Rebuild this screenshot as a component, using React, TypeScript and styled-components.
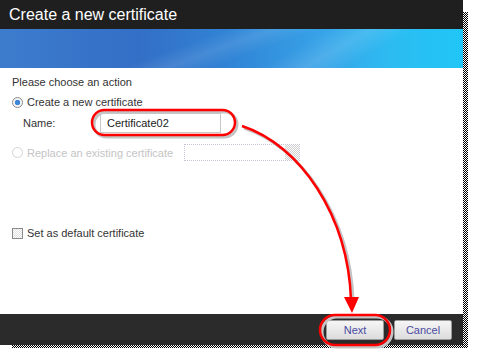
import React from "react";
import styled, { createGlobalStyle } from "styled-components";

const GlobalStyle = createGlobalStyle`
  html, body {
    margin: 0;
    padding: 0;
    background: #ffffff;
  }
`;

const Page = styled.div`
  position: relative;
  width: 479px;
  height: 362px;
  overflow: hidden;
  background: #fff;
`;

const Dialog = styled.div`
  position: relative;
  width: 463px;
  height: 345px;
  display: flex;
  flex-direction: column;
  background: #fff;

  /* dithered drop shadow of the screenshot */
  &::before {
    content: "";
    position: absolute;
    top: 12px;
    left: 12px;
    right: -5px;
    bottom: -3px;
    background: repeating-conic-gradient(#000 0 25%, #fff 0 50%) 0 0 / 2px 2px;
    z-index: 0;
  }
`;

const TitleBar = styled.div`
  position: relative;
  z-index: 1;
  height: 29px;
  flex: none;
  display: flex;
  align-items: center;
  padding-left: 9px;
  background: #1f1f1f;
  color: #ffffff;
  font-family: "Liberation Sans", Arial, sans-serif;
  font-size: 16px;
  padding-top: 1px;
  box-sizing: border-box;
`;

const Banner = styled.div`
  position: relative;
  z-index: 1;
  height: 39px;
  flex: none;
  background:
    linear-gradient(160deg, transparent 0 40%, rgba(255, 255, 255, 0.1) 48%, transparent 56%),
    linear-gradient(150deg, transparent 0 62%, rgba(255, 255, 255, 0.12) 70%, transparent 78%),
    linear-gradient(90deg, #3d7ccd 0%, #336fc6 30%, #3184d6 50%, #37a4e8 70%, #2cbcf2 85%, #20c6f6 100%);
`;

const Body = styled.div`
  position: relative;
  z-index: 1;
  flex: 1;
  background: #fff;
  padding: 7px 12px 0;
  font-family: "Liberation Sans", Tahoma, sans-serif;
  font-size: 11px;
  color: #333;
`;

const Heading = styled.div`
  line-height: 14px;
`;

const OptionRow = styled.div<{ $top: number; $disabled?: boolean }>`
  display: flex;
  align-items: center;
  gap: 4px;
  margin-top: ${(p) => p.$top}px;
  height: 14px;
  line-height: 14px;
  color: ${(p) => (p.$disabled ? "#c4c4c4" : "#333")};
`;

const Radio = styled.span<{ $checked?: boolean; $disabled?: boolean }>`
  width: 9px;
  height: 9px;
  border-radius: 50%;
  border: 1px solid ${(p) => (p.$disabled ? "#d4d4d4" : "#8a8a8a")};
  background: ${(p) =>
    p.$checked ? "radial-gradient(circle, #3a86d4 0 2.5px, #f4f4f4 3px)" : "#fff"};
  flex: none;
`;

const Checkbox = styled.span`
  width: 9px;
  height: 9px;
  border: 1px solid #8a8a8a;
  background: repeating-conic-gradient(#e0e0e0 0 25%, #fff 0 50%) 0 0 / 2px 2px;
  flex: none;
`;

const NameRow = styled.div`
  display: flex;
  align-items: center;
  margin-top: 4px;
  height: 20px;
  padding-left: 11px;
`;

const Label = styled.span`
  width: 77px;
`;

const TextInput = styled.div`
  width: 113px;
  height: 18px;
  border: 1px solid #c8c8c8;
  padding-left: 6px;
  line-height: 18px;
  color: #222;
`;

const ReplaceRow = styled.div`
  display: flex;
  align-items: center;
  margin-top: 11px;
  height: 17px;
`;

const ReplaceOption = styled(OptionRow)`
  margin-top: 0;
  width: 172px;
`;

const DisabledSelect = styled.div`
  position: relative;
  width: 114px;
  height: 15px;
  border: 1px dotted #c4c4d4;
`;

const SelectArrow = styled.span`
  position: absolute;
  right: 0;
  top: 0;
  bottom: 0;
  width: 14px;
  background: repeating-conic-gradient(#d0d0d0 0 25%, #fff 0 50%) 0 0 / 2px 2px;
`;

const Footer = styled.div`
  position: relative;
  z-index: 1;
  height: 31px;
  flex: none;
  background: #2b2b2b;
  display: flex;
  align-items: center;
  justify-content: flex-end;
  gap: 10px;
  padding-right: 11px;
`;

const Button = styled.button`
  width: 58px;
  height: 20px;
  padding: 0;
  border: 1px solid #9a9a9a;
  border-radius: 2px;
  background: linear-gradient(#f6f6f6, #dcdcdc);
  color: #4a4aa0;
  font-family: "Liberation Sans", Tahoma, sans-serif;
  font-size: 11px;
`;

const Overlay = styled.svg`
  position: absolute;
  left: 0;
  top: 0;
  z-index: 5;
  pointer-events: none;
`;

export default function App() {
  return (
    <Page>
      <GlobalStyle />
      <Dialog>
        <TitleBar>Create a new certificate</TitleBar>
        <Banner />
        <Body>
          <Heading>Please choose an action</Heading>
          <OptionRow $top={6}>
            <Radio $checked />
            Create a new certificate
          </OptionRow>
          <NameRow>
            <Label>Name:</Label>
            <TextInput>Certificate02</TextInput>
          </NameRow>
          <ReplaceRow>
            <ReplaceOption $top={0} $disabled>
              <Radio $disabled />
              Replace an existing certificate
            </ReplaceOption>
            <DisabledSelect>
              <SelectArrow />
            </DisabledSelect>
          </ReplaceRow>
          <OptionRow $top={65}>
            <Checkbox />
            Set as default certificate
          </OptionRow>
        </Body>
        <Footer>
          <Button>Next</Button>
          <Button>Cancel</Button>
        </Footer>
      </Dialog>

      <Overlay width={479} height={362} viewBox="0 0 479 362">
        <g fill="none" stroke="#c4c4c4" strokeWidth={3}>
          <rect x={94} y={112} width={143} height={25} rx={12.5} />
          <path d="M244 128 C302 147, 350 217, 353 300" />
          <rect x={322} y={317} width={70} height={30} rx={15} />
        </g>
        <g fill="none" stroke="#ff0000" strokeWidth={2.5}>
          <rect x={92} y={110} width={143} height={25} rx={12.5} />
          <path d="M242 126 C300 145, 348 215, 351 300" />
          <rect x={320} y={315} width={70} height={30} rx={15} />
        </g>
        <polygon points="344,297 359,297 352,313" fill="#ff0000" />
      </Overlay>
    </Page>
  );
}
